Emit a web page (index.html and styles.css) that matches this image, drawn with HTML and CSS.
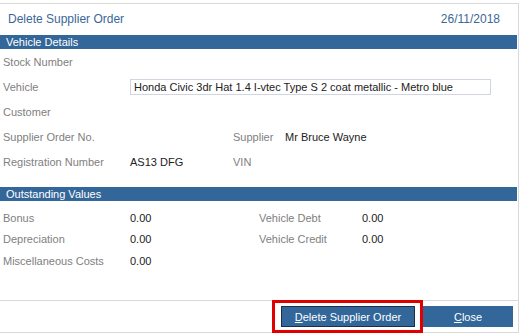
FILE: index.html
```html
<html>
<head>
<title>Delete Supplier Order</title>
  <link rel="stylesheet" href="styles.css">
</head>

<body>
<div class="dialog">
  <div class="titlebar">
    <span class="title">Delete Supplier Order</span>
    <span class="date">26/11/2018</span>
  </div>

  <div class="section">Vehicle Details</div>
  <div class="rows vehicle">
    <div class="row">
      <span class="label">Stock Number</span>
    </div>
    <div class="row">
      <span class="label">Vehicle</span>
      <div class="field">Honda Civic 3dr Hat 1.4 I-vtec Type S 2 coat metallic - Metro blue</div>
    </div>
    <div class="row">
      <span class="label">Customer</span>
    </div>
    <div class="row">
      <span class="label">Supplier Order No.</span>
      <span class="value"></span>
      <span class="label2">Supplier</span>
      <span class="value">Mr Bruce Wayne</span>
    </div>
    <div class="row">
      <span class="label">Registration Number</span>
      <span class="value">AS13 DFG</span>
      <span class="label2">VIN</span>
      <span class="value"></span>
    </div>
  </div>

  <div class="section">Outstanding Values</div>
  <div class="rows money">
    <div class="row">
      <span class="label">Bonus</span>
      <span class="value">0.00</span>
      <span class="label2">Vehicle Debt</span>
      <span class="value">0.00</span>
    </div>
    <div class="row">
      <span class="label">Depreciation</span>
      <span class="value">0.00</span>
      <span class="label2">Vehicle Credit</span>
      <span class="value">0.00</span>
    </div>
    <div class="row">
      <span class="label">Miscellaneous Costs</span>
      <span class="value">0.00</span>
    </div>
  </div>

  <div class="footer">
    <div class="highlight">
      <button class="btn focused"><u>D</u>elete Supplier Order</button>
    </div>
    <button class="btn"><u>C</u>lose</button>
  </div>
</div>
</body>
</html>
```

FILE: styles.css
```css
body{
  margin: 0;
  background: #fff;
  font-family: "Liberation Sans", Arial, sans-serif;
  font-size: 11px;
}

.dialog{
  margin-top: 3px;
  width: 518px;
  height: 328px;
  border-top: 1px solid #d9d9d9;
  border-right: 1px solid #d9d9d9;
  border-bottom: 1px solid #d9d9d9;
  display: flex;
  flex-direction: column;
}

.titlebar{
  height: 29px;
  display: flex;
  align-items: center;
  justify-content: space-between;
  padding: 0 18px 2px 8px;
  color: #3a6898;
  font-size: 12px;
}

.section{
  height: 14px;
  line-height: 14px;
  margin-right: 1px;
  padding-left: 6px;
  background: #336699;
  color: #fff;
}

.rows{
  display: flex;
  flex-direction: column;
}

.vehicle{
  padding-bottom: 13px;
}

.vehicle .row{
  height: 25px;
}

.money{
  padding-top: 6px;
}

.money .row{
  height: 21.5px;
}

.row{
  display: flex;
  align-items: center;
  padding-left: 3px;
}

.label{
  width: 127px;
  color: #808080;
}

.value{
  color: #222;
}

.vehicle .value{
  width: 103px;
}

.vehicle .label2{
  width: 52px;
  color: #808080;
}

.money .value{
  width: 129px;
}

.money .label2{
  width: 103px;
  color: #808080;
}

.field{
  width: 356px;
  height: 14px;
  line-height: 14px;
  border: 1px solid #cfd6e0;
  padding-left: 3px;
  color: #222;
  white-space: nowrap;
  overflow: hidden;
}

.footer{
  margin-top: auto;
  height: 31px;
  border-top: 1px solid #d9d9d9;
  display: flex;
  align-items: center;
  justify-content: flex-end;
  padding-right: 5px;
}

.highlight{
  border: 3px solid #e00000;
  padding: 3px 5px 3px 6px;
  display: flex;
}

.btn{
  height: 21px;
  width: 90px;
  border: 1px solid #336699;
  background: #336699;
  color: #fff;
  font-family: "Liberation Sans", Arial, sans-serif;
  font-size: 11px;
  padding: 0;
}

.btn.focused{
  width: 134px;
  border-color: #1c2f48;
}
```
